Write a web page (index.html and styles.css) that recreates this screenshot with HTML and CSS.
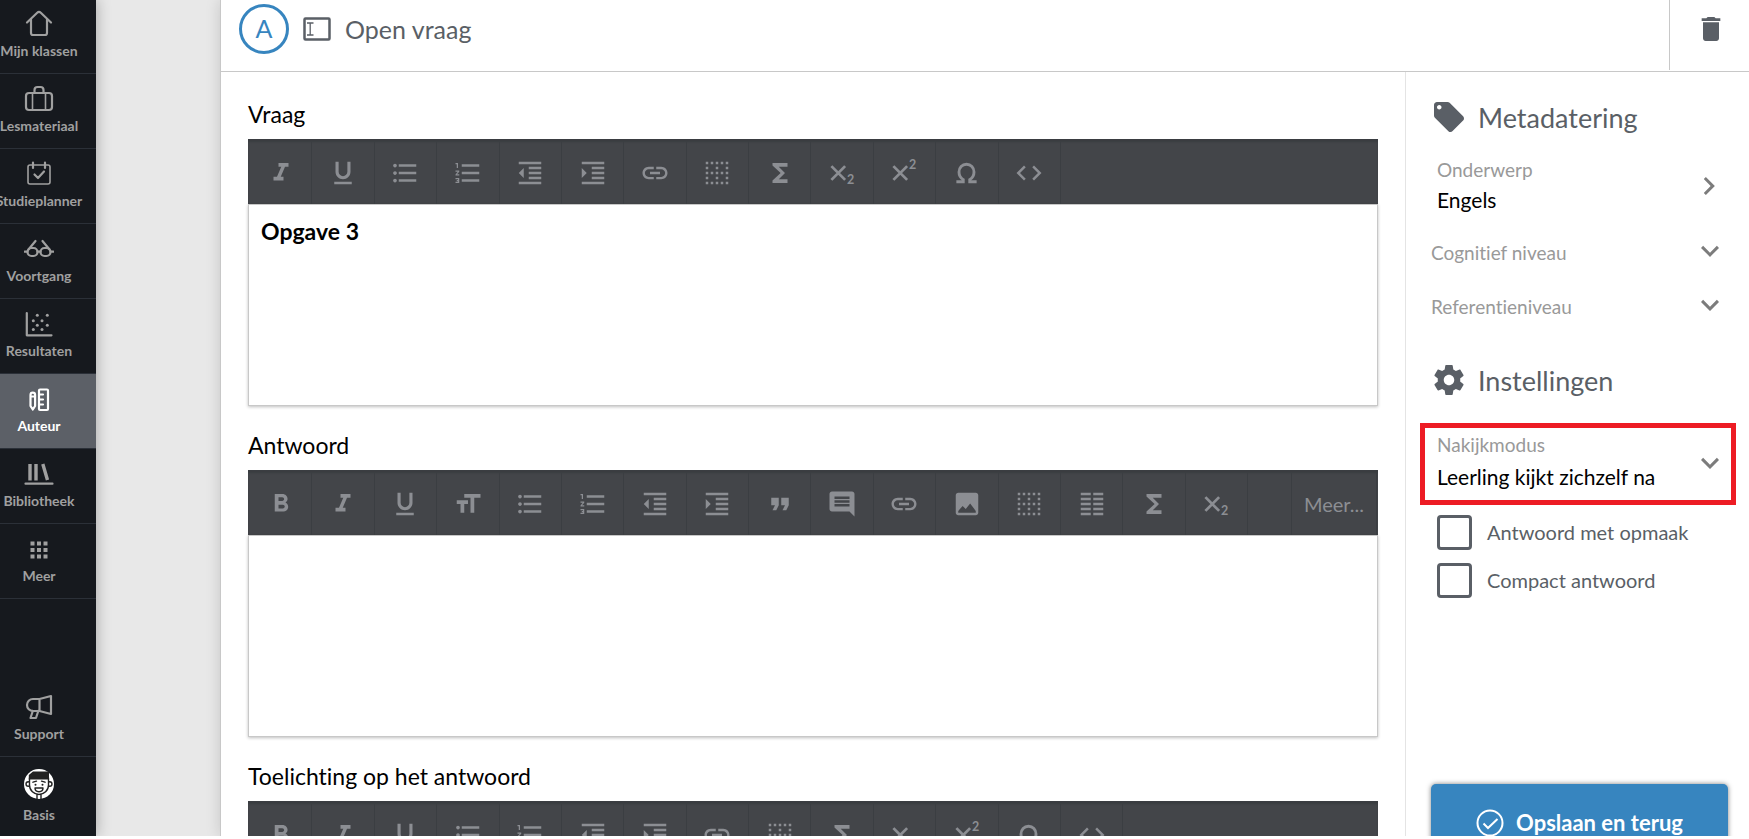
FILE: index.html
```html
<!DOCTYPE html>
<html lang="nl">
<head>
    <meta charset="UTF-8">
    <meta name="viewport" content="width=device-width, initial-scale=1.0">
    <title>Open vraag</title>
    <link rel="stylesheet" href="styles.css">
</head>
<body>
    <svg class="sprite">
        <symbol id="bold" viewBox="0 0 24 24"><path d="M15.6 10.79c.97-.67 1.65-1.77 1.65-2.79 0-2.26-1.75-4-4-4H7v14h7.04c2.09 0 3.71-1.7 3.71-3.79 0-1.52-.86-2.82-2.15-3.42zM10 6.5h3c.83 0 1.5.67 1.5 1.5s-.67 1.5-1.5 1.5h-3v-3zm3.5 9H10v-3h3.5c.83 0 1.5.67 1.5 1.5s-.67 1.5-1.5 1.5z"/></symbol>
        <symbol id="italic" viewBox="0 0 24 24"><path d="M10 4v3h2.21l-3.42 8H6v3h8v-3h-2.21l3.42-8H18V4z"/></symbol>
        <symbol id="underline" viewBox="0 0 24 24"><path d="M12 17c3.31 0 6-2.69 6-6V3h-2.5v8c0 1.93-1.57 3.5-3.5 3.5S8.5 12.93 8.5 11V3H6v8c0 3.31 2.69 6 6 6zm-7 2v2h14v-2H5z"/></symbol>
        <symbol id="size" viewBox="0 0 24 24"><path d="M9 4v3h5v12h3V7h5V4H9zm-6 8h3v7h3v-7h3V9H3v3z"/></symbol>
        <symbol id="ul" viewBox="0 0 24 24"><path d="M4 10.5c-.83 0-1.5.67-1.5 1.5s.67 1.5 1.5 1.5 1.5-.67 1.5-1.5-.67-1.5-1.5-1.5zm0-6c-.83 0-1.5.67-1.5 1.5S3.17 7.5 4 7.5 5.5 6.83 5.5 6 4.83 4.5 4 4.5zm0 12c-.83 0-1.5.68-1.5 1.5s.68 1.5 1.5 1.5 1.5-.68 1.5-1.5-.67-1.5-1.5-1.5zM7 19h14v-2H7v2zm0-6h14v-2H7v2zm0-8v2h14V5H7z"/></symbol>
        <symbol id="ol" viewBox="0 0 24 24"><path d="M2 17h2v.5H3v1h1v.5H2v1h3v-4H2v1zm1-9h1V4H2v1h1v3zm-1 3h1.8L2 13.1v.9h3v-1H3.2L5 10.9V10H2v1zm5-6v2h14V5H7zm0 14h14v-2H7v2zm0-6h14v-2H7v2z"/></symbol>
        <symbol id="outdent" viewBox="0 0 24 24"><path d="M11 17h10v-2H11v2zm-8-5l4 4V8l-4 4zm0 9h18v-2H3v2zM3 3v2h18V3H3zm8 6h10V7H11v2zm0 4h10v-2H11v2z"/></symbol>
        <symbol id="indent" viewBox="0 0 24 24"><path d="M3 21h18v-2H3v2zM3 8v8l4-4-4-4zm8 9h10v-2H11v2zM3 3v2h18V3H3zm8 6h10V7H11v2zm0 4h10v-2H11v2z"/></symbol>
        <symbol id="quote" viewBox="0 0 24 24"><path d="M6 17h3l2-4V7H5v6h3zm8 0h3l2-4V7h-6v6h3z"/></symbol>
        <symbol id="comment" viewBox="0 0 24 24"><path d="M21.99 4c0-1.1-.89-2-1.99-2H4c-1.1 0-2 .9-2 2v12c0 1.1.9 2 2 2h14l4 4-.01-18zM18 14H6v-2h12v2zm0-3H6V9h12v2zm0-3H6V6h12v2z"/></symbol>
        <symbol id="link" viewBox="0 0 24 24"><path d="M3.9 12c0-1.71 1.39-3.1 3.1-3.1h4V7H7c-2.76 0-5 2.24-5 5s2.24 5 5 5h4v-1.9H7c-1.71 0-3.1-1.39-3.1-3.1zM8 13h8v-2H8v2zm9-6h-4v1.9h4c1.71 0 3.1 1.39 3.1 3.1s-1.39 3.1-3.1 3.1h-4V17h4c2.76 0 5-2.24 5-5s-2.24-5-5-5z"/></symbol>
        <symbol id="image" viewBox="0 0 24 24"><path d="M21 19V5c0-1.1-.9-2-2-2H5c-1.1 0-2 .9-2 2v14c0 1.1.9 2 2 2h14c1.1 0 2-.9 2-2zM5 19v-1.500l3.500-4 2.500 2.500 3.500-4.500 4.500 6v1.500z"/></symbol>
        <symbol id="table" viewBox="0 0 24 24"><path d="M3 3h2v2H3zM7 3h2v2H7zM11 3h2v2h-2zM15 3h2v2h-2zM19 3h2v2h-2zM3 7h2v2H3zM11 7h2v2h-2zM19 7h2v2h-2zM3 11h2v2H3zM7 11h2v2H7zM11 11h2v2h-2zM15 11h2v2h-2zM19 11h2v2h-2zM3 15h2v2H3zM11 15h2v2h-2zM19 15h2v2h-2zM3 19h2v2H3zM7 19h2v2H7zM11 19h2v2h-2zM15 19h2v2h-2zM19 19h2v2h-2z"/></symbol>
        <symbol id="columns" viewBox="0 0 24 24"><path d="M3 3h8v2H3zM13 3h8v2h-8zM3 7h8v2H3zM13 7h8v2h-8zM3 11h8v2H3zM13 11h8v2h-8zM3 15h8v2H3zM13 15h8v2h-8zM3 19h8v2H3zM13 19h8v2h-8z"/></symbol>
        <symbol id="sigma" viewBox="0 0 24 24"><path d="M18 4H6v2l6.500 6L6 18v2h12v-3h-7l5-5-5-5h7z"/></symbol>
        <symbol id="sub" viewBox="0 0 24 24"><path d="M3.500 6.500l11 11M14.500 6.500l-11 11" fill="none" stroke="currentColor" stroke-width="2.200"/><text x="16" y="21" class="script">2</text></symbol>
        <symbol id="sup" viewBox="0 0 24 24"><path d="M3.500 6.500l11 11M14.500 6.500l-11 11" fill="none" stroke="currentColor" stroke-width="2.200"/><text x="16" y="9" class="script">2</text></symbol>
        <symbol id="omega" viewBox="0 0 24 24"><path d="M3.500 19h5.500v-1.700C6.900 16 5.600 13.700 5.600 11.200c0-3.600 2.500-6.200 6-6.200s6 2.600 6 6.200c0 2.500-1.300 4.800-3.400 6.100V19h5.500" fill="none" stroke="currentColor" stroke-width="2.300"/></symbol>
        <symbol id="code" viewBox="0 0 24 24"><path d="M9.4 16.6L4.8 12l4.600-4.600L8 6l-6 6 6 6 1.400-1.400zm5.200 0l4.600-4.600-4.600-4.600L16 6l6 6-6 6-1.400-1.400z"/></symbol>
        <symbol id="chevron" viewBox="0 0 24 24"><path d="M7.41 7.84L12 12.42l4.590-4.580L18 9.250l-6 6-6-6z"/></symbol>
    </svg>

    <div class="app">
        <nav class="sidebar">
            <a class="nav-item" href="#">
                <svg viewBox="0 0 30 30"><path d="M3 14.500L13.200 4.800a2.600 2.600 0 0 1 3.600 0L27 14.500M7 11v14a2 2 0 0 0 2 2h12a2 2 0 0 0 2-2V11"/></svg>
                <span>Mijn klassen</span>
            </a>
            <a class="nav-item" href="#">
                <svg viewBox="0 0 30 30"><rect x="2" y="10" width="26" height="17" rx="3"/><path d="M10.500 10V7a3 3 0 0 1 3-3h3a3 3 0 0 1 3 3v3"/><path class="thin" d="M8.500 10v17M21.500 10v17"/></svg>
                <span>Lesmateriaal</span>
            </a>
            <a class="nav-item" href="#">
                <svg viewBox="0 0 30 30"><rect class="thin" x="4" y="7" width="22" height="19" rx="2"/><path d="M9 4.500v5.500M21 4.500v5.500M10.500 16.500l3.500 3.500 6-6.500"/></svg>
                <span>Studieplanner</span>
            </a>
            <a class="nav-item" href="#">
                <svg viewBox="0 0 30 30"><rect x="3.500" y="15" width="10" height="8" rx="4"/><rect x="16.500" y="15" width="10" height="8" rx="4"/><path d="M.5 18.700h3M13.500 18.700h3M26.500 18.700h3M4.500 16.500l7-8.500M25.500 16.500l-7-8.500"/></svg>
                <span>Voortgang</span>
            </a>
            <a class="nav-item" href="#">
                <svg viewBox="0 0 30 30"><path d="M2.800 5v22.300h24.700"/><g class="solid"><circle cx="13.300" cy="7.300" r="1.500"/><circle cx="23.300" cy="7.300" r="1.500"/><circle cx="9.300" cy="12.700" r="1.500"/><circle cx="18" cy="12.700" r="1.500"/><circle cx="13.300" cy="17.300" r="1.500"/><circle cx="23.300" cy="17.300" r="1.500"/><circle cx="9.300" cy="21.500" r="1.500"/><circle cx="18" cy="21.500" r="1.500"/></g></svg>
                <span>Resultaten</span>
            </a>
            <a class="nav-item active" href="#">
                <svg viewBox="0 0 30 30"><rect x="15" y="6.500" width="9" height="20.500" rx="1"/><path d="M15 11.500h4M15 16.500h4M15 21.500h4M6.500 12a2.300 2.300 0 0 1 4.600 0v11l-2.300 3.500L6.500 23zM6.500 13.500h4.600"/></svg>
                <span>Auteur</span>
            </a>
            <a class="nav-item" href="#">
                <svg viewBox="0 0 30 30"><path d="M1.500 25.700h27"/><path class="thick" d="M6 6v16.500M12 6v16.500M18.800 6l4.700 16"/></svg>
                <span>Bibliotheek</span>
            </a>
            <a class="nav-item" href="#">
                <svg viewBox="0 0 30 30"><path class="solid" d="M6.500 8.500h4v4h-4zM13 8.500h4v4h-4zM19.500 8.500h4v4h-4zM6.500 15h4v4h-4zM13 15h4v4h-4zM19.500 15h4v4h-4zM6.500 21.500h4v4h-4zM13 21.500h4v4h-4zM19.500 21.500h4v4h-4z"/></svg>
                <span>Meer</span>
            </a>
            <a class="nav-item support" href="#">
                <svg viewBox="0 0 30 30"><path d="M15.500 8H9a6 6 0 0 0 0 12h6.500zM15.500 8L27 5v18l-11.500-3M8.800 20L6.500 27H12l2.300-7"/></svg>
                <span>Support</span>
            </a>
            <a class="nav-item account" href="#">
                <svg viewBox="0 0 30 30">
                    <circle class="face" cx="15" cy="15" r="15"/>
                    <g class="ink">
                        <circle cx="4.300" cy="15" r="2.300"/><circle cx="25.700" cy="15" r="2.300"/>
                        <path class="face-line" d="M5.500 9v7c0 5.500 4.500 9.500 9.500 9.500s9.500-4 9.500-9.500V9zM13 25.500V30M17 25.500V30M11 19h8c0 2.500-1.500 3.700-4 3.700S11 21.500 11 19zM9 13.200l3.500-1M21 13.200l-3.500-1"/>
                        <path class="hair" d="M4.800 10.500V6L9 2.500h16v8z"/>
                        <circle class="hair" cx="11.500" cy="15.800" r="1"/><circle class="hair" cx="18.500" cy="15.800" r="1"/>
                    </g>
                </svg>
                <span>Basis</span>
            </a>
        </nav>

        <main class="panel">
            <header class="panel-header">
                <span class="badge">A</span>
                <svg class="type-icon" viewBox="0 0 28 24"><rect x="1.500" y="1.500" width="25" height="21" rx="1" stroke-width="2.500"/><path d="M4 6h6.500M4 18h6.500M7.200 6v12" stroke-width="1.300"/></svg>
                <h1>Open vraag</h1>
                <button class="delete" type="button" aria-label="Verwijderen">
                    <svg viewBox="0 0 24 24"><path d="M6 19c0 1.100.9 2 2 2h8c1.100 0 2-.9 2-2V7H6v12zM19 4h-3.500l-1-1h-5l-1 1H5v2h14V4z"/></svg>
                </button>
            </header>

            <div class="panel-body">
                <div class="editors">
                    <section class="editor">
                        <label for="vraag">Vraag</label>
                        <div class="toolbar">
                            <button type="button"><svg><use href="#italic"/></svg></button>
                            <button type="button"><svg><use href="#underline"/></svg></button>
                            <button type="button"><svg><use href="#ul"/></svg></button>
                            <button type="button"><svg><use href="#ol"/></svg></button>
                            <button type="button"><svg><use href="#outdent"/></svg></button>
                            <button type="button"><svg><use href="#indent"/></svg></button>
                            <button type="button"><svg><use href="#link"/></svg></button>
                            <button type="button"><svg><use href="#table"/></svg></button>
                            <button type="button"><svg><use href="#sigma"/></svg></button>
                            <button type="button"><svg><use href="#sub"/></svg></button>
                            <button type="button"><svg><use href="#sup"/></svg></button>
                            <button type="button"><svg><use href="#omega"/></svg></button>
                            <button type="button"><svg><use href="#code"/></svg></button>
                        </div>
                        <textarea id="vraag">Opgave 3</textarea>
                    </section>

                    <section class="editor">
                        <label for="antwoord">Antwoord</label>
                        <div class="toolbar">
                            <button type="button"><svg><use href="#bold"/></svg></button>
                            <button type="button"><svg><use href="#italic"/></svg></button>
                            <button type="button"><svg><use href="#underline"/></svg></button>
                            <button type="button"><svg><use href="#size"/></svg></button>
                            <button type="button"><svg><use href="#ul"/></svg></button>
                            <button type="button"><svg><use href="#ol"/></svg></button>
                            <button type="button"><svg><use href="#outdent"/></svg></button>
                            <button type="button"><svg><use href="#indent"/></svg></button>
                            <button type="button"><svg><use href="#quote"/></svg></button>
                            <button type="button"><svg><use href="#comment"/></svg></button>
                            <button type="button"><svg><use href="#link"/></svg></button>
                            <button type="button"><svg><use href="#image"/></svg></button>
                            <button type="button"><svg><use href="#table"/></svg></button>
                            <button type="button"><svg><use href="#columns"/></svg></button>
                            <button type="button"><svg><use href="#sigma"/></svg></button>
                            <button type="button"><svg><use href="#sub"/></svg></button>
                            <button type="button" class="more">Meer...</button>
                        </div>
                        <textarea id="antwoord"></textarea>
                    </section>

                    <section class="editor">
                        <label for="toelichting">Toelichting op het antwoord</label>
                        <div class="toolbar">
                            <button type="button"><svg><use href="#bold"/></svg></button>
                            <button type="button"><svg><use href="#italic"/></svg></button>
                            <button type="button"><svg><use href="#underline"/></svg></button>
                            <button type="button"><svg><use href="#ul"/></svg></button>
                            <button type="button"><svg><use href="#ol"/></svg></button>
                            <button type="button"><svg><use href="#outdent"/></svg></button>
                            <button type="button"><svg><use href="#indent"/></svg></button>
                            <button type="button"><svg><use href="#link"/></svg></button>
                            <button type="button"><svg><use href="#table"/></svg></button>
                            <button type="button"><svg><use href="#sigma"/></svg></button>
                            <button type="button"><svg><use href="#sub"/></svg></button>
                            <button type="button"><svg><use href="#sup"/></svg></button>
                            <button type="button"><svg><use href="#omega"/></svg></button>
                            <button type="button"><svg><use href="#code"/></svg></button>
                        </div>
                        <textarea id="toelichting"></textarea>
                    </section>
                </div>

                <aside class="settings">
                    <h2>
                        <svg viewBox="0 0 24 24"><path d="M21.410 11.580l-9-9C12.050 2.220 11.550 2 11 2H4c-1.100 0-2 .9-2 2v7c0 .55.22 1.050.59 1.420l9 9c.36.36.86.58 1.410.58.55 0 1.050-.22 1.410-.59l7-7c.37-.36.59-.86.59-1.410 0-.55-.23-1.060-.59-1.420zM5.500 7C4.670 7 4 6.330 4 5.500S4.670 4 5.500 4 7 4.670 7 5.500 6.330 7 5.500 7z"/></svg>
                        Metadatering
                    </h2>
                    <button class="subject" type="button">
                        <span class="caption">Onderwerp</span>
                        <span>Engels</span>
                        <svg class="chevron right"><use href="#chevron"/></svg>
                    </button>
                    <div class="dropdown">
                        <select aria-label="Cognitief niveau"><option>Cognitief niveau</option></select>
                        <svg class="chevron"><use href="#chevron"/></svg>
                    </div>
                    <div class="dropdown">
                        <select aria-label="Referentieniveau"><option>Referentieniveau</option></select>
                        <svg class="chevron"><use href="#chevron"/></svg>
                    </div>

                    <h2 class="second">
                        <svg viewBox="0 0 24 24"><path d="M19.430 12.980c.04-.32.07-.64.07-.98s-.03-.66-.07-.98l2.110-1.650c.19-.15.24-.42.12-.64l-2-3.460c-.12-.22-.39-.3-.61-.22l-2.490 1c-.52-.4-1.080-.73-1.690-.98l-.38-2.650C14.460 2.180 14.250 2 14 2h-4c-.25 0-.46.18-.49.42l-.38 2.650c-.61.25-1.170.59-1.690.98l-2.490-1c-.23-.09-.49 0-.61.22l-2 3.460c-.13.22-.07.49.12.64l2.110 1.650c-.04.32-.07.65-.07.98s.03.66.07.98l-2.110 1.650c-.19.15-.24.42-.12.64l2 3.460c.12.22.39.3.61.22l2.490-1c.52.4 1.080.73 1.690.98l.38 2.650c.03.24.24.42.49.42h4c.25 0 .46-.18.49-.42l.38-2.650c.61-.25 1.170-.59 1.690-.98l2.490 1c.23.09.49 0 .61-.22l2-3.460c.12-.22.07-.49-.12-.64l-2.110-1.650zM12 15.500c-1.930 0-3.500-1.570-3.500-3.500s1.570-3.500 3.500-3.500 3.500 1.570 3.500 3.500-1.570 3.500-3.500 3.500z"/></svg>
                        Instellingen
                    </h2>
                    <div class="dropdown highlight">
                        <label class="caption" for="nakijkmodus">Nakijkmodus</label>
                        <select id="nakijkmodus"><option>Leerling kijkt zichzelf na</option></select>
                        <svg class="chevron"><use href="#chevron"/></svg>
                    </div>
                    <div class="checks">
                        <label><input type="checkbox"> Antwoord met opmaak</label>
                        <label><input type="checkbox"> Compact antwoord</label>
                    </div>
                    <button class="save" type="button">
                        <svg viewBox="0 0 28 28"><circle cx="14" cy="14" r="12.500"/><path d="M7.500 14.500l4.500 4.500 9.500-9"/></svg>
                        Opslaan en terug
                    </button>
                </aside>
            </div>
        </main>
    </div>
</body>
</html>
```
FILE: styles.css
```css
* {
    box-sizing: border-box;
}
body {
    margin: 0;
    font-family: Lato, "Open Sans", sans-serif;
    font-size: 21px;
    font-variant-ligatures: none;
    color: #000;
    background-color: #fff;
    overflow: hidden;
}
button, select, textarea {
    font: inherit;
    font-variant-ligatures: none;
    color: inherit;
    margin: 0;
    padding: 0;
    border: none;
    background: none;
}
.sprite {
    display: none;
}
.script {
    font: bold 10px Lato, sans-serif;
}
.app {
    display: flex;
    height: calc(100vh - 3px);
    background-color: #e8e8e8;
    overflow: hidden;
}

/* Sidebar, shifted partly out of view */
.sidebar {
    display: flex;
    flex-direction: column;
    flex: none;
    width: 114px;
    margin: -1px 0 0 -18px;
    background-color: #16191e;
    box-shadow: 0 0 14px rgba(0,0,0,0.3);
}
.nav-item {
    display: flex;
    flex-direction: column;
    align-items: center;
    flex: none;
    height: 75px;
    padding-top: 9px;
    border-bottom: 1px solid #2b3038;
    color: #a0a0a0;
    font-size: 14px;
    font-weight: bold;
    line-height: 20px;
    text-decoration: none;
    gap: 3px;
}
.nav-item svg {
    width: 30px;
    height: 30px;
    fill: none;
    stroke: currentColor;
    stroke-width: 2.2;
    stroke-linecap: round;
    stroke-linejoin: round;
}
.nav-item .thin {
    stroke-width: 1.6;
}
.nav-item .thick {
    stroke-width: 3.4;
    stroke-linecap: butt;
}
.nav-item .solid {
    fill: currentColor;
    stroke: none;
}
.nav-item.active {
    background-color: #5c6067;
    color: #fff;
}
.nav-item.support {
    margin-top: auto;
}
.nav-item.account {
    height: 79px;
    padding-top: 12px;
    border-bottom: none;
    gap: 6px;
}
.account .face {
    fill: #fff;
    stroke: none;
}
.account .ink {
    stroke: #222;
    stroke-width: 1.4;
}
.account .face-line {
    fill: #fff;
}
.account .hair {
    fill: #222;
    stroke: none;
}

/* Panel */
.panel {
    display: flex;
    flex-direction: column;
    flex: 1;
    min-width: 0;
    margin-left: 124px;
    background-color: #fff;
    border-left: 1px solid #c8c8c8;
    box-shadow: 0 0 14px rgba(0,0,0,0.15);
}
.panel-header {
    display: flex;
    align-items: center;
    flex: none;
    height: 72px;
    padding: 0 0 13px 18px;
    border-bottom: 1px solid #c8c8c8;
    color: #5a5f66;
}
.badge {
    width: 50px;
    height: 50px;
    border: 3px solid #3785bf;
    border-radius: 50%;
    color: #3785bf;
    font-size: 25px;
    line-height: 43px;
    text-align: center;
}
.type-icon {
    width: 28px;
    height: 24px;
    margin: 0 14px;
    fill: none;
    stroke: currentColor;
}
h1, h2 {
    margin: 0;
    font-weight: normal;
    color: #5a5f66;
}
h1 {
    font-size: 25px;
    line-height: 28px;
}
.delete {
    align-self: stretch;
    width: 80px;
    margin: 0 0 -12px auto;
    padding: 0 0 12px 3px;
    border-left: 1px solid #c8c8c8;
}
.delete svg {
    display: block;
    width: 32px;
    height: 32px;
    margin: auto;
    fill: #5a5f66;
}
.panel-body {
    display: flex;
    flex: 1;
    min-height: 0;
}

/* Editors */
.editors {
    flex: 1;
    min-width: 0;
    padding: 28px 27px 0 27px;
}
.editor {
    margin-bottom: 25px;
}
.editor label {
    display: block;
    padding-bottom: 11px;
    font-size: 23px;
    line-height: 28px;
}
.toolbar {
    display: grid;
    grid-template-columns: repeat(16, 1fr) 43px 86px;
    height: 65px;
    padding: 2px 1px 0 2px;
    background-color: #434549;
    box-shadow: inset 0 3px 2px #3a3d41;
}
.toolbar button {
    display: flex;
    align-items: center;
    justify-content: center;
    border-right: 1px solid #3b3e42;
    color: #8c8e93;
}
.toolbar .more {
    grid-column: 18;
    border-left: 1px solid #3b3e42;
    font-size: 20px;
}
.toolbar svg {
    width: 30px;
    height: 30px;
    fill: currentColor;
}
.editor textarea {
    display: block;
    width: 100%;
    height: 202px;
    padding: 12px;
    border: 1px solid #c8c8c8;
    box-shadow: 0 1px 3px rgba(0,0,0,0.25);
    font-size: 23px;
    font-weight: bold;
    line-height: 28px;
    resize: none;
}

/* Settings */
.settings {
    display: flex;
    flex-direction: column;
    flex: none;
    width: 344px;
    padding: 27px 21px 0 25px;
    border-left: 1px solid #e4e4e4;
}
h2 {
    display: flex;
    align-items: center;
    gap: 11px;
    height: 36px;
    font-size: 27px;
}
h2.second {
    margin-top: 29px;
}
h2 svg {
    width: 36px;
    height: 36px;
    fill: #5a5f66;
}
.subject {
    position: relative;
    display: flex;
    flex-direction: column;
    height: 60px;
    margin: 21px 0 9px;
    padding: 0 6px;
    line-height: 32px;
    text-align: left;
}
.caption {
    color: #999;
    font-size: 19px;
    line-height: 28px;
}
.dropdown {
    position: relative;
    height: 54px;
}
.dropdown select {
    display: block;
    width: 100%;
    height: 54px;
    appearance: none;
    color: #999;
    font-size: 19px;
}
.chevron {
    position: absolute;
    right: 0;
    top: 50%;
    width: 36px;
    height: 36px;
    margin-top: -18px;
    fill: #7c7c7c;
}
.chevron.right {
    transform: rotate(-90deg);
}
.highlight {
    height: 82px;
    margin: 25px -8px 0 -11px;
    padding: 3px 12px;
    border: 5px solid #ed1c24;
}
.highlight .caption {
    display: block;
}
.highlight select {
    height: 34px;
    color: #000;
    font-size: 21px;
}
.highlight .chevron {
    right: 3px;
}
.checks {
    display: flex;
    flex-direction: column;
    gap: 12px;
    padding: 9px 6px;
}
.checks label {
    display: flex;
    align-items: center;
    gap: 15px;
    height: 36px;
    color: #5a5f66;
    font-size: 20px;
}
.checks input {
    width: 35px;
    height: 35px;
    margin: 0;
    appearance: none;
    border: 3px solid #5a5f66;
    border-radius: 4px;
}
.save {
    display: flex;
    align-items: center;
    justify-content: center;
    flex: none;
    gap: 12px;
    height: 77px;
    margin: auto 0 -25px;
    border-radius: 5px;
    background-color: #3785bf;
    box-shadow: 0 0 5px rgba(0,0,0,0.5);
    color: #fff;
    font-size: 22px;
    font-weight: bold;
}
.save svg {
    width: 28px;
    height: 28px;
    fill: none;
    stroke: #fff;
    stroke-width: 2;
}
```
